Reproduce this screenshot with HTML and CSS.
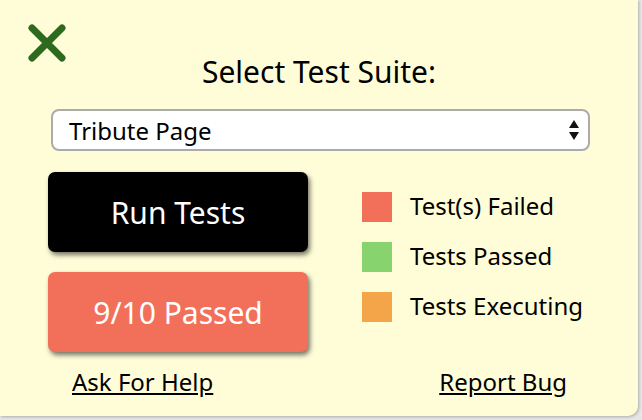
FILE: index.html
```html
<!DOCTYPE html>
<html>
<head>
<meta charset="utf-8">
<link rel="stylesheet" href="styles.css">
</head>
<body>
<div class="panel">
  <button class="close" aria-label="Close">
    <svg width="40" height="40" viewBox="0 0 40 40"><path d="M5 5 L35 35 M35 5 L5 35" stroke="#2d6a1d" stroke-width="7" stroke-linecap="round" fill="none"/></svg>
  </button>
  <h1 class="title">Select Test Suite:</h1>
  <div class="select">
    <span>Tribute Page</span>
    <svg class="arrows" width="12" height="22" viewBox="0 0 12 22"><path d="M6 1 L11 9 L1 9 Z M1 13 L11 13 L6 21 Z" fill="#111"/></svg>
  </div>
  <div class="main">
    <div class="buttons">
      <div class="btn run">Run Tests</div>
      <div class="btn result">9/10 Passed</div>
    </div>
    <ul class="legend">
      <li><span class="sw fail"></span><span class="lbl">Test(s) Failed</span></li>
      <li><span class="sw pass"></span><span class="lbl">Tests Passed</span></li>
      <li><span class="sw exec"></span><span class="lbl">Tests Executing</span></li>
    </ul>
  </div>
  <div class="links">
    <a href="#" class="help">Ask For Help</a>
    <a href="#" class="bug">Report Bug</a>
  </div>
</div>
</body>
</html>
```
FILE: styles.css
```css
html, body { margin: 0; padding: 0; }
body {
  background: #e6e6e6;
  width: 642px;
  height: 420px;
  font-family: "Noto Sans", "Open Sans", sans-serif;
  color: #000;
}
.panel {
  position: relative;
  width: 638px;
  height: 416px;
  box-sizing: border-box;
  background: #fffdd8;
  border-bottom-right-radius: 10px;
  box-shadow: 1px 1px 3px rgba(0,0,0,0.25);
  padding-top: 50px;
}
.close {
  position: absolute;
  left: 27px;
  top: 23px;
  width: 40px;
  height: 40px;
  padding: 0;
  border: none;
  background: none;
}
.close svg { display: block; }
.title {
  margin: 0;
  font-size: 30px;
  font-weight: 400;
  text-align: center;
  line-height: 44px;
}
.select {
  margin: 15px 0 0 51px;
  width: 539px;
  height: 42px;
  box-sizing: border-box;
  background: #fff;
  border: 2px solid #ababab;
  border-radius: 8px;
  display: flex;
  align-items: center;
  justify-content: space-between;
  padding: 0 8px 0 16px;
  font-size: 24px;
}
.arrows { display: block; }
.main {
  display: flex;
  margin-top: 21px;
  padding-left: 48px;
}
.buttons {
  display: flex;
  flex-direction: column;
  gap: 20px;
  width: 260px;
}
.btn {
  height: 80px;
  border-radius: 7px;
  display: flex;
  align-items: center;
  justify-content: center;
  color: #fff;
  font-size: 30px;
  box-shadow: 2px 3px 5px rgba(0,0,0,0.55);
}
.run { background: #000; }
.result { background: #f2705a; }
.legend {
  list-style: none;
  margin: 20px 0 0 54px;
  padding: 0;
  display: flex;
  flex-direction: column;
  gap: 20px;
}
.legend li {
  display: flex;
  align-items: center;
  height: 30px;
  font-size: 24px;
}
.lbl { margin-bottom: 3px; }
.sw {
  width: 30px;
  height: 30px;
  margin-right: 18px;
  flex: none;
}
.fail { background: #f2705a; }
.pass { background: #87d46f; }
.exec { background: #f4a54a; }
.links {
  display: flex;
  justify-content: space-between;
  padding: 14px 71px 0 72px;
  font-size: 24px;
  line-height: 32px;
}
.links a { color: #000; text-decoration: underline; }
```
